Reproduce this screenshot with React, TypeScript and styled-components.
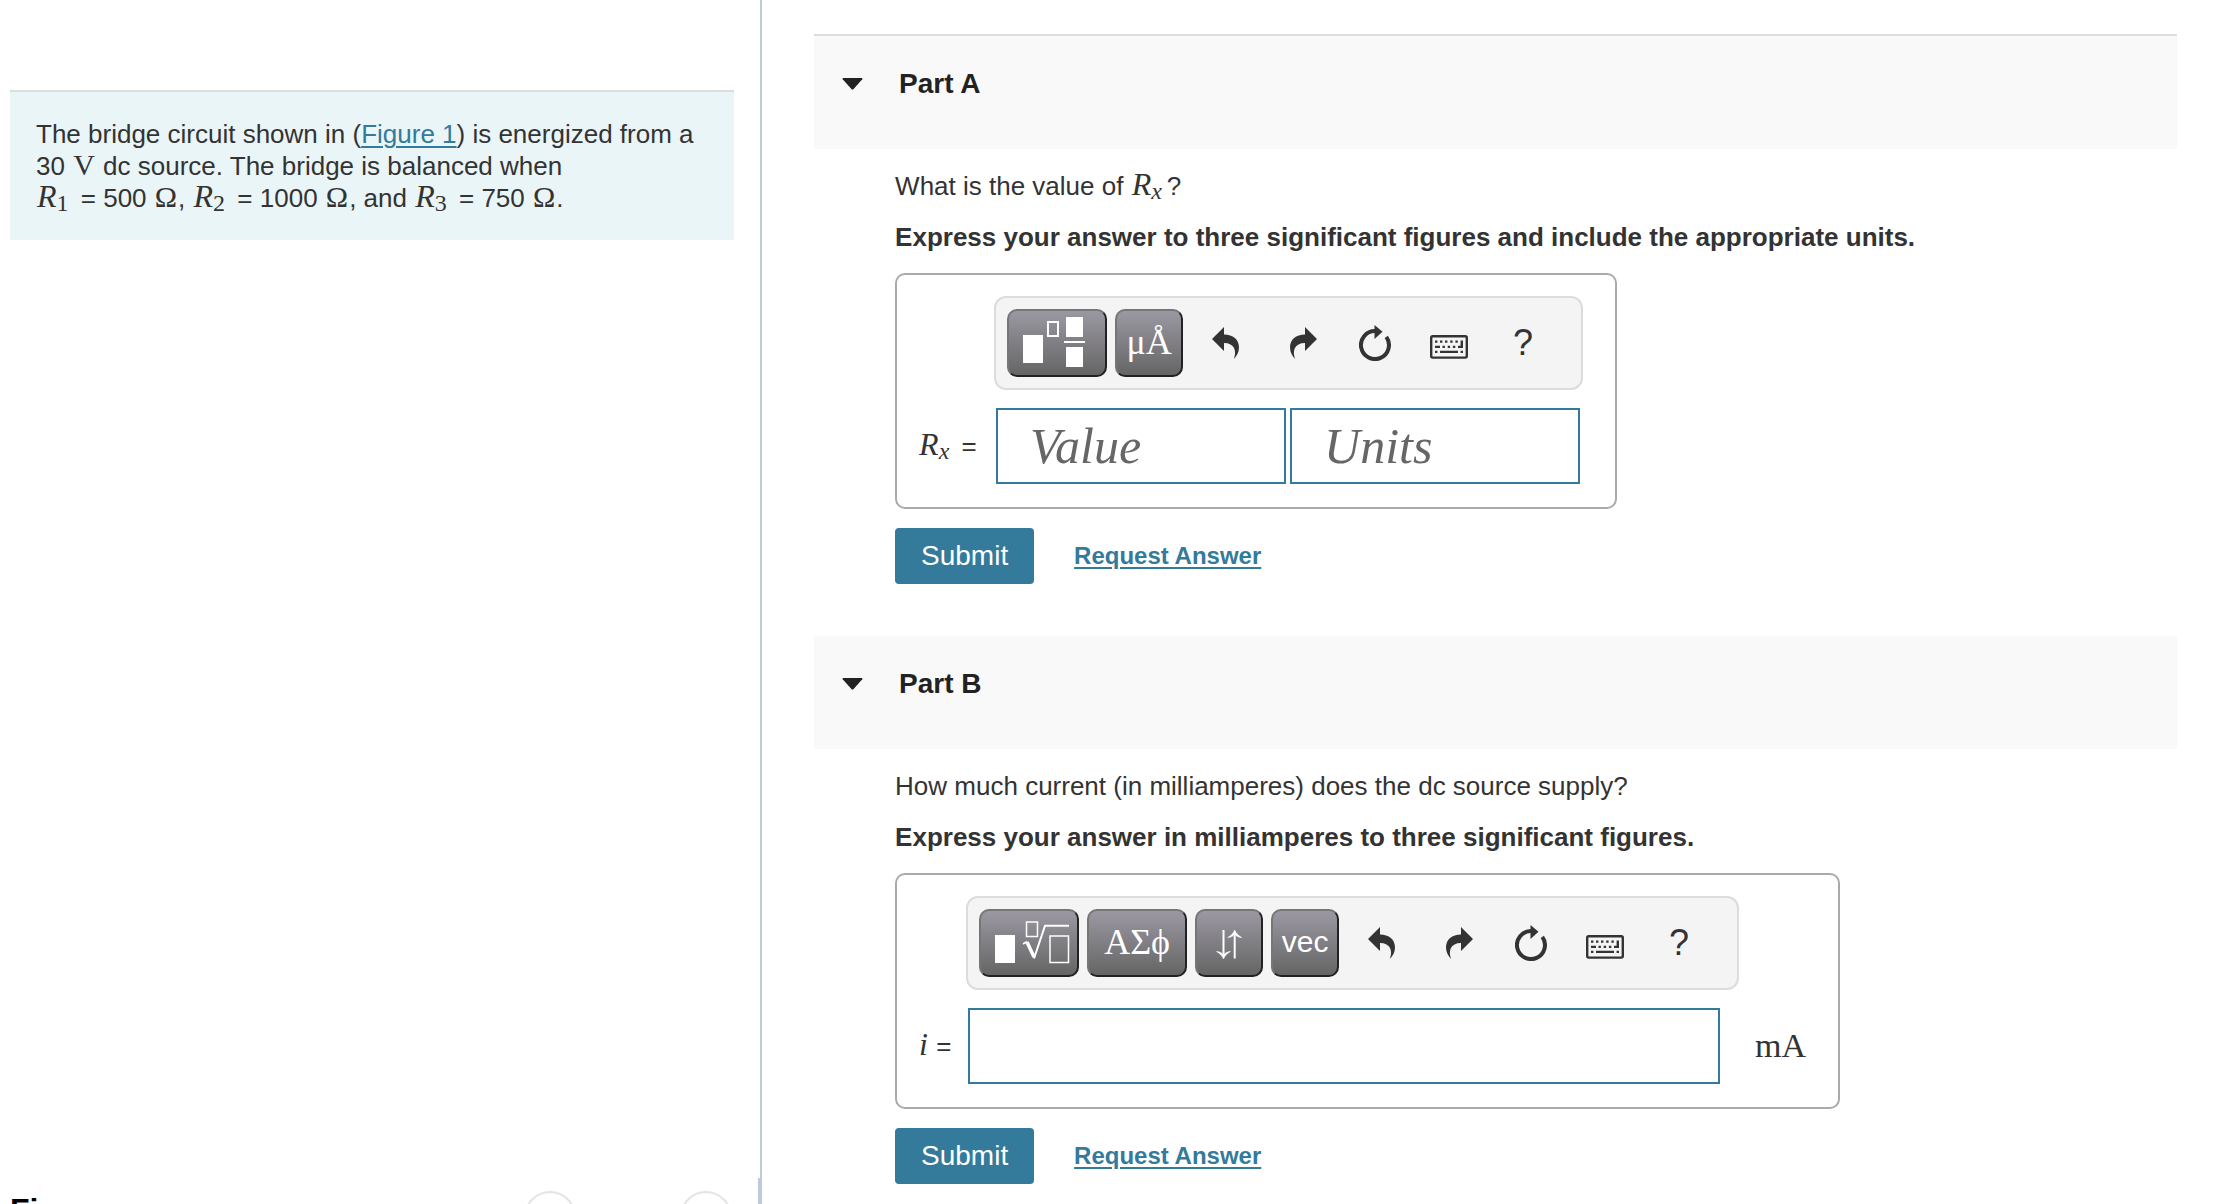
import React from "react";
import styled, { createGlobalStyle } from "styled-components";
import { ChevronLeft, ChevronRight } from "lucide-react";

const sans = `"Liberation Sans", Arial, Helvetica, sans-serif`;
const serif = `"Liberation Serif", "Times New Roman", serif`;
const teal = "#337a9b";

const GlobalStyle = createGlobalStyle`
  *, *::before, *::after { box-sizing: border-box; }
  body {
    margin: 0;
    background: #fff;
    color: #333;
    font: 26px/32px ${sans};
  }
  button, input { font: inherit; color: inherit; }
`;

const Page = styled.div`
  display: grid;
  grid-template-columns: minmax(0, 35fr) minmax(0, 67fr);
  grid-template-rows: minmax(0, 1fr);
  height: 100vh;
  overflow: hidden;
`;

const Sidebar = styled.aside`
  display: grid;
  grid-template-rows: minmax(0, 1fr) 26px;
`;

const ProblemPane = styled.div`
  padding: 90px 26px 0 10px;
  border-right: 2px solid #bccadb;
`;

const Intro = styled.p`
  margin: 0;
  padding: 26px;
  border-top: 2px solid #ddd;
  background: #eaf5f8;
`;

const FigurePane = styled.section`
  display: flex;
  align-items: flex-start;
  gap: 104px;
  padding: 13px 26px 0 10px;
  border-right: 4px solid #bccadb;
  overflow: hidden;
`;

const FigureTitle = styled.h2`
  flex: 1;
  margin: 0;
  color: #000;
  font-size: 32px;
  line-height: 38px;
`;

const PagerButton = styled.button`
  display: flex;
  align-items: center;
  justify-content: center;
  width: 52px;
  height: 52px;
  padding: 0;
  border: 2px solid #e4e4e4;
  border-radius: 50%;
  background: #fff;
`;

const Main = styled.main`
  padding: 34px 44px 0 52px;
`;

const Parts = styled.div`
  border-top: 2px solid #ddd;
`;

const Part = styled.section`
  margin-bottom: 52px;
`;

const PartHeader = styled.header`
  padding: 32px 28px 49px;
  background: #f9f9f9;
`;

const PartTitle = styled.h2`
  margin: 0;
  font-size: 28px;
  line-height: 32px;
`;

const PartToggle = styled.button`
  display: flex;
  align-items: center;
  gap: 36px;
  padding: 0;
  border: 0;
  background: none;
  color: #222;
`;

const PartBody = styled.form`
  display: flex;
  flex-direction: column;
  align-items: flex-start;
  padding: 21px 0 0 81px;
`;

const Question = styled.p`
  margin: 0 0 19px;
`;

const Instruction = styled.p`
  margin: 0 0 20px;
  font-weight: bold;
`;

const MathText = styled.span`
  margin: 0 1px;
  font-family: ${serif};
  font-size: 30px;
  line-height: 0;
`;

const MathItalic = styled(MathText)`
  font-size: 32px;
  font-style: italic;
`;

const Subscript = styled.sub<{ $italic?: boolean }>`
  margin-right: 4px;
  font-size: 24px;
  font-style: ${(p) => (p.$italic ? "italic" : "normal")};
  line-height: 0;
  vertical-align: -4px;
`;

const AnswerBox = styled.div<{ $label: number }>`
  display: grid;
  grid-template-columns: ${(p) => p.$label}px auto;
  row-gap: 18px;
  margin-bottom: 19px;
  padding: 21px 32px 23px 21px;
  border: 2px solid #aaa;
  border-radius: 10px;
`;

const Toolbar = styled.div`
  grid-column: 2;
  justify-self: start;
  display: flex;
  align-items: center;
  gap: 7px;
  height: 94px;
  padding: 0 21px 0 11px;
  border: 2px solid #dcdcdc;
  border-radius: 12px;
  background: #f4f4f4;
`;

const ToolGroup = styled.div<{ $gap?: number }>`
  display: flex;
  gap: ${(p) => p.$gap ?? 0}px;
`;

const MathTool = styled.button<{ $wide?: boolean; $serif?: boolean }>`
  display: flex;
  align-items: center;
  justify-content: center;
  width: ${(p) => (p.$wide ? 100 : 68)}px;
  height: 68px;
  padding: 0 0 2px;
  border: 2px solid;
  border-color: #767676 #222 #222 #767676;
  border-radius: 10px;
  background: linear-gradient(#9b98a2, #656565);
  color: #fff;
  font-family: ${(p) => (p.$serif ? serif : sans)};
  font-size: ${(p) => (p.$serif ? 36 : 30)}px;
`;

const IconTool = styled.button`
  display: flex;
  align-items: center;
  justify-content: center;
  width: 74px;
  height: 68px;
  padding: 0;
  border: 0;
  background: none;
  color: #333;
  font-size: 36px;
`;

const FieldLabel = styled.label`
  align-self: center;
  white-space: nowrap;
`;

const Fields = styled.div`
  display: flex;
  align-items: center;
  gap: 4px;
  padding-left: 2px;
`;

const Field = styled.input<{ $wide?: boolean }>`
  width: ${(p) => (p.$wide ? 752 : 290)}px;
  height: 76px;
  padding: 0 32px;
  border: 2px solid ${teal};
  border-radius: 0;
  background: #fff;
  font-family: ${serif};
  font-size: 50px;
  font-style: italic;
  &::placeholder { color: #666; opacity: 1; }
`;

const Unit = styled(MathText)`
  margin: 0;
  padding-left: 31px;
  font-size: 34px;
  line-height: 32px;
`;

const Actions = styled.div`
  display: flex;
  align-items: center;
  gap: 40px;
`;

const Submit = styled.button`
  width: 139px;
  height: 56px;
  padding: 0;
  border: 0;
  border-radius: 4px;
  background: ${teal};
  color: #fff;
  font-size: 28px;
`;

const Link = styled.a`
  color: ${teal};
  text-decoration: underline;
  text-decoration-thickness: 2px;
  text-underline-offset: 3px;
`;

const RequestLink = styled(Link)`
  font-size: 24px;
  font-weight: bold;
`;

const Resistance = ({ index, value }: { index: number; value: number }) => (
  <>
    <MathItalic>R<Subscript>{index}</Subscript></MathItalic> = {value} <MathText>Ω</MathText>
  </>
);

const Rx = () => (
  <MathItalic>R<Subscript $italic>x</Subscript></MathItalic>
);

const Caret = () => (
  <svg width="21" height="12" viewBox="0 0 21 12" aria-hidden="true">
    <path d="M1.500 0h18q1.500 0 .8 1.200L11.600 11q-1.100 1.200-2.200 0L.7 1.200Q0 0 1.500 0Z" fill="currentColor" />
  </svg>
);

const TemplateIcon = () => (
  <svg width="96" height="64" viewBox="2 1 96 64" fill="#fff" aria-hidden="true">
    <path d="M16 26h20v28H16zM59 8h17v20H59zM57 32h21v2H57zM59 38h17v20H59z" />
    <rect x="41" y="13" width="10" height="14" fill="none" stroke="#fff" strokeWidth="2" />
  </svg>
);

const RadicalIcon = () => (
  <svg width="96" height="64" viewBox="2 1 96 64" fill="none" stroke="#fff" aria-hidden="true">
    <path d="M16 26h20v28H16z" fill="#fff" stroke="none" />
    <path d="M47.500 13h11v14.500h-11zM71 27h18.500v26.500H71z" strokeWidth="1.500" />
    <path d="M44 35l4-2.500" strokeWidth="1.500" />
    <path d="M48 33l7 15" strokeWidth="3.500" />
    <path d="M55 49.500L66 16.700h24" strokeWidth="2" />
  </svg>
);

const ArrowsIcon = () => (
  <svg width="64" height="64" viewBox="2 1 64 64" fill="none" stroke="#fff" strokeWidth="2" aria-hidden="true">
    <path d="M28.500 21v27M39.700 22.500v27" />
    <path d="M28.500 50c-1-3-4-6-7-7.500 3 0 5.500 1.500 7 3.500 1.500-2 4-3.500 7-3.500-3 1.500-6 4.500-7 7.500ZM39.700 21c-1 3-4 6-7 7.500 3 0 5.500-1.500 7-3.500 1.500 2 4 3.500 7 3.500-3-1.500-6-4.500-7-7.500Z" fill="#fff" strokeWidth=".5" />
  </svg>
);

const UndoIcon = ({ flip }: { flip?: boolean }) => (
  <svg width="31" height="32" viewBox="0 0 31 32" aria-hidden="true">
    <path
      d="M0 12L12 0v7.500C21 7.500 27 12.500 27 20.500c0 4.500-2 8.500-5.200 11.500C25 24 22.500 16 12 16v8Z"
      transform={flip ? "matrix(-1 0 0 1 31 0)" : undefined}
      fill="currentColor"
    />
  </svg>
);

const ResetIcon = () => (
  <svg width="32" height="36" viewBox="0 0 32 36" aria-hidden="true">
    <path d="M27.300 11.800A14 14 0 1 1 16 6" fill="none" stroke="currentColor" strokeWidth="4" />
    <path d="M15.500 0l8 6.700-8 7.300Z" fill="currentColor" />
  </svg>
);

const KeyboardIcon = () => (
  <svg width="38" height="32" viewBox="0 -8 38 32" fill="currentColor" aria-hidden="true">
    <rect x="1.200" y="1.200" width="35.600" height="21.400" rx="1.500" fill="none" stroke="currentColor" strokeWidth="2.400" />
    <path d="M5 5.500h2.400v2.200H5zM10 5.500h2.400v2.200H10zM15 5.500h2.400v2.200H15zM20.200 5.500h2.400v2.200h-2.400zM25.400 5.500h2.400v2.200h-2.400z" />
    <path d="M5 10.700h5v2.200H5zM12.500 10.700h2.400v2.200h-2.400zM17.700 10.700h2.400v2.200h-2.400zM22.900 10.700h2.400v2.200h-2.400zM28 10.700h2.600V5.500H33v7.400h-5z" />
    <path d="M5 15.700h2.400v2.200H5zM10 15.700h18v2.200H10zM30.600 15.700H33v2.200h-2.400z" />
  </svg>
);

const EditTools = () => (
  <ToolGroup>
    <IconTool type="button" aria-label="Undo"><UndoIcon /></IconTool>
    <IconTool type="button" aria-label="Redo"><UndoIcon flip /></IconTool>
    <IconTool type="button" aria-label="Reset"><ResetIcon /></IconTool>
    <IconTool type="button" aria-label="Keyboard shortcuts"><KeyboardIcon /></IconTool>
    <IconTool type="button" aria-label="Help">?</IconTool>
  </ToolGroup>
);

const PartSection = ({ title, children }: { title: string; children: React.ReactNode }) => (
  <Part>
    <PartHeader>
      <PartTitle>
        <PartToggle type="button" aria-expanded="true"><Caret />{title}</PartToggle>
      </PartTitle>
    </PartHeader>
    <PartBody onSubmit={(e) => e.preventDefault()}>
      {children}
      <Actions>
        <Submit type="submit">Submit</Submit>
        <RequestLink href="#request">Request Answer</RequestLink>
      </Actions>
    </PartBody>
  </Part>
);

export default function App() {
  return (
    <Page>
      <GlobalStyle />
      <Sidebar>
        <ProblemPane>
          <Intro>
            The bridge circuit shown in (<Link href="#figure">Figure 1</Link>) is energized from a
            <br />
            30 <MathText>V</MathText> dc source. The bridge is balanced when
            <br />
            <Resistance index={1} value={500} />, <Resistance index={2} value={1000} />, and{" "}
            <Resistance index={3} value={750} />.
          </Intro>
        </ProblemPane>
        <FigurePane id="figure">
          <FigureTitle>Figure</FigureTitle>
          <PagerButton type="button" aria-label="Previous figure"><ChevronLeft /></PagerButton>
          <PagerButton type="button" aria-label="Next figure"><ChevronRight /></PagerButton>
        </FigurePane>
      </Sidebar>
      <Main>
        <Parts>
          <PartSection title="Part A">
            <Question>What is the value of <Rx />?</Question>
            <Instruction>
              Express your answer to three significant figures and include the appropriate units.
            </Instruction>
            <AnswerBox $label={76}>
              <Toolbar>
                <ToolGroup $gap={8}>
                  <MathTool type="button" $wide aria-label="Templates"><TemplateIcon /></MathTool>
                  <MathTool type="button" $serif>μÅ</MathTool>
                </ToolGroup>
                <EditTools />
              </Toolbar>
              <FieldLabel htmlFor="rx-value"><Rx /> =</FieldLabel>
              <Fields>
                <Field id="rx-value" placeholder="Value" />
                <Field aria-label="Units" placeholder="Units" />
              </Fields>
            </AnswerBox>
          </PartSection>
          <PartSection title="Part B">
            <Question>How much current (in milliamperes) does the dc source supply?</Question>
            <Instruction>Express your answer in milliamperes to three significant figures.</Instruction>
            <AnswerBox $label={48}>
              <Toolbar>
                <ToolGroup $gap={8}>
                  <MathTool type="button" $wide aria-label="Templates"><RadicalIcon /></MathTool>
                  <MathTool type="button" $wide $serif>ΑΣϕ</MathTool>
                  <MathTool type="button" aria-label="Arrows"><ArrowsIcon /></MathTool>
                  <MathTool type="button">vec</MathTool>
                </ToolGroup>
                <EditTools />
              </Toolbar>
              <FieldLabel htmlFor="current"><MathItalic>i</MathItalic> =</FieldLabel>
              <Fields>
                <Field id="current" $wide />
                <Unit>mA</Unit>
              </Fields>
            </AnswerBox>
          </PartSection>
        </Parts>
      </Main>
    </Page>
  );
}
